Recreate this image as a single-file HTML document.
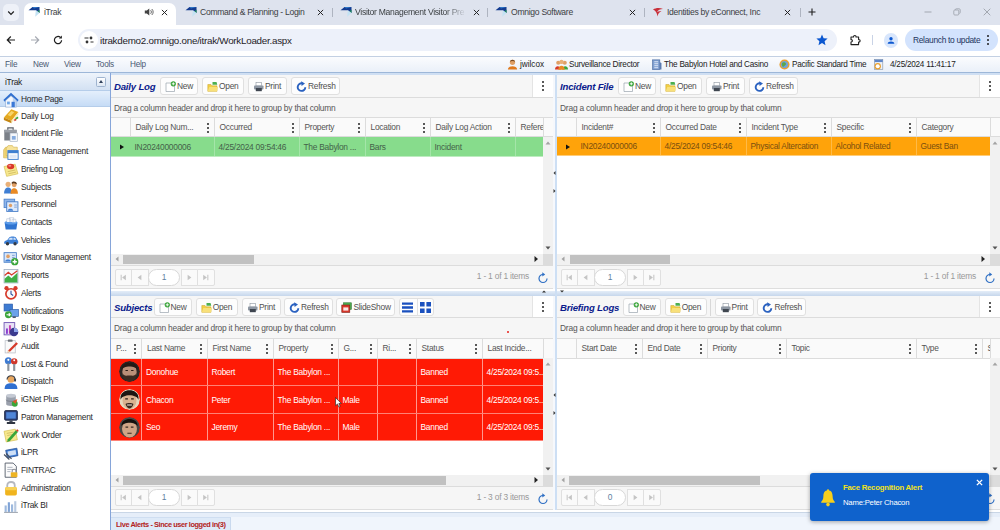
<!DOCTYPE html>
<html lang="en">
<head>
<meta charset="utf-8">
<title>iTrak</title>
<style>
*{box-sizing:border-box;margin:0;padding:0}
html,body{width:1000px;height:530px;overflow:hidden;background:#fff}
body{font-family:"Liberation Sans",sans-serif;font-size:9px;color:#333;position:relative}
.abs{position:absolute}
/* ---------- browser chrome ---------- */
#tabbar{position:absolute;left:0;top:0;width:1000px;height:25px;background:#dee3ee}
#tabbar .tab{position:absolute;top:0;height:25px;font-size:8.6px;color:#3c4043;line-height:24px;white-space:nowrap;letter-spacing:-.3px}
#tabbar .fade{overflow:hidden;-webkit-mask-image:linear-gradient(90deg,#000 80%,transparent);mask-image:linear-gradient(90deg,#000 80%,transparent)}
.fav{position:absolute;top:7px;width:12px;height:10px;margin-left:.5px}
.tx{position:absolute;top:8.5px;width:7px;height:7px;margin-left:.5px}
#tabbar .active{background:#fff;border-radius:7px 7px 0 0;top:3px;height:22px;line-height:18px}
#tabbar .x{position:absolute;font-size:9px;color:#222;top:0}
#tabbar .sep{position:absolute;top:8px;width:1px;height:9px;background:#aeb4c0}
#toolbar{position:absolute;left:0;top:25px;width:1000px;height:31px;background:#fff}
#url{position:absolute;left:78px;top:4px;width:759px;height:22px;border-radius:11px;background:#edf1fa}
#url span{position:absolute;left:22px;top:0;line-height:23px;font-size:9.8px;color:#1f2328;letter-spacing:-.25px;white-space:nowrap}
#menubar{position:absolute;left:0;top:56px;width:1000px;height:17px;background:linear-gradient(#fbfcfe,#eaf0f9);border-top:1px solid #c3d0e3;border-bottom:1px solid #9db7d8;font-size:8.2px;color:#4a5872;letter-spacing:-.25px}
#menubar span{position:absolute;top:-1px;line-height:18px;white-space:nowrap}
#menubar .dk{color:#222}
.mi{position:absolute;top:2px;width:11px;height:11px}
/* ---------- sidebar ---------- */
#side{position:absolute;left:0;top:73px;width:110px;height:457px;background:#fff}
#side .hd{position:absolute;left:0;top:0;width:110px;height:18px;background:linear-gradient(#eef4fb,#d3e1f3);border-bottom:1px solid #a8bfdd;line-height:18.5px;padding-left:5px;font-size:8.4px;letter-spacing:-.25px;color:#222}
#side .hd .col{position:absolute;left:96px;top:4px;width:10px;height:10px;border:1px solid #9fb4cf;border-radius:1.5px;background:linear-gradient(#fff,#dde7f3)}
#side .hd .col:after{content:"";position:absolute;left:1.5px;top:2px;border:2.5px solid transparent;border-bottom:3.5px solid #30405a;border-top:0}
#side .it{position:absolute;left:0;width:110px;height:17px;line-height:17px;padding-left:21px;font-size:8.4px;letter-spacing:-.25px;color:#2a2a2a;white-space:nowrap}
#side .sel{background:linear-gradient(#e4effc,#c6dcf6);border:1px solid #b5cdea;border-left:0;border-right:0}
#side .ic{position:absolute;left:3px;top:.5px;width:16px;height:16px}

/* ---------- panels ---------- */
#work{position:absolute;left:110px;top:73px;width:890px;height:457px;background:#f6f8fc;border-left:1px solid #86a5d9;overflow:hidden}
.sph{position:absolute;left:0;width:890px;height:2px;background:#c9daf0;z-index:3}
.spv{position:absolute;top:0;width:2.5px;background:#cddff4;z-index:3}
.cover{position:absolute;left:0;width:890px;background:#f6f8fc;z-index:2}
.panel{position:absolute;background:#fff;overflow:hidden}
.tb{position:absolute;left:0;top:0;right:0;height:var(--tb);background:#f6f6f6;border-bottom:1px solid #dcdcdc}
.tb .ttl{position:absolute;left:3px;top:1px;line-height:23px;font-size:9.6px;font-weight:bold;font-style:italic;color:#0a1a8c;white-space:nowrap;letter-spacing:-.2px}
.btn{position:absolute;top:3px;height:18px;border:1px solid #e0e0e0;border-radius:3px;background:#fdfdfd;font-size:8.4px;line-height:16px;color:#505050;white-space:nowrap;letter-spacing:-.25px}
.btn svg{position:absolute;left:4px;top:3px;width:11px;height:11px}
.btn span{position:absolute;left:16px;top:0}
.more{position:absolute;right:0;top:0;width:21px;bottom:0;background:#fff;border-left:1px solid #e4e4e4}
.more i,.ch i{position:absolute;width:2px;height:2px;background:#222;border-radius:1px}
.grp{position:absolute;left:0;top:var(--tb);right:0;height:var(--grp);background:#f6f6f6;border-bottom:1px solid #dcdcdc;line-height:var(--grp);padding-left:3px;font-size:8.4px;color:#555;white-space:nowrap;letter-spacing:-.2px}
.chr{position:absolute;left:0;top:calc(var(--tb) + var(--grp));right:0;height:var(--chh);background:#fafafa;border-bottom:1px solid #dcdcdc}
.ch{position:absolute;top:0;bottom:0;border-right:1px solid #dcdcdc;line-height:19px;padding-left:5px;font-size:8.4px;color:#555;white-space:nowrap;overflow:hidden;letter-spacing:-.25px}
.row{position:absolute;left:0;height:20px;border-bottom:1px solid rgba(255,255,255,.45)}
.c{position:absolute;top:0;height:100%;border-right:1px solid rgba(255,255,255,.35);padding-left:4px;font-size:8.4px;white-space:nowrap;overflow:hidden;letter-spacing:-.25px}
.vs{position:absolute;right:0;width:10px;background:#f1f1f1}
.hs{position:absolute;left:0;right:0;height:11px;background:#f1f1f1}
.hs b{position:absolute;top:1px;height:9px;background:#c1c1c1}
.pg{position:absolute;left:0;right:0;bottom:0;height:24px;background:#f6f6f6;border-top:1px solid #dcdcdc;border-bottom:1px solid #dedede;font-size:8.4px;color:#999}
.pg .pb{position:absolute;top:2.7px;width:17px;height:17px;border:1px solid #e0e0e0;background:#fafafa}
.pg .pb svg{position:absolute;left:0;top:0;width:15px;height:15px}
.pg .pn{position:absolute;top:2.7px;left:37px;width:32px;height:17px;border:1px solid #d8d8d8;border-radius:9px;background:#fff;text-align:center;line-height:15px;color:#5f7f9f;font-size:8.4px;z-index:1}
.pg .info{position:absolute;right:24px;top:0;line-height:21.5px;white-space:nowrap;letter-spacing:-.2px}
#status{position:absolute;left:0;top:443.5px;width:890px;height:14px;background:#f0f5fc;z-index:4}
#status .la{position:absolute;left:0;top:0;width:119.5px;height:14px;background:#deeaf8;border-right:1px solid #c9d9ee;border-top:1px solid #cfdef1;padding-left:5px;line-height:14.5px;font-size:7.4px;font-weight:bold;color:#b3221c;white-space:nowrap;letter-spacing:-.43px}
#toast{position:absolute;left:810px;top:473px;width:179px;height:48px;border-radius:3px;background:#0f62cc;box-shadow:0 1px 4px rgba(0,0,0,.35);z-index:10}
#toast .t1{position:absolute;left:33px;top:9.5px;font-size:7.7px;font-weight:bold;color:#f3e21a;white-space:nowrap;letter-spacing:-.2px;line-height:10px}
#toast .t2{position:absolute;left:33px;top:25px;font-size:7.7px;color:#fff;white-space:nowrap;letter-spacing:-.2px;line-height:10px}
</style>
</head>
<body>
<!-- ======= TAB BAR ======= -->
<div id="tabbar">
  <div style="position:absolute;left:3px;top:4px;width:16px;height:17px;border-radius:5px;background:#eef1f8"></div>
  <svg viewBox="0 0 8 6" style="position:absolute;left:7px;top:10px;width:8px;height:6px"><path d="M1.2 1.5 L4 4.3 L6.8 1.5" stroke="#1f1f1f" stroke-width="1.2" fill="none"/></svg>
  <div class="tab active" style="left:24px;width:152px"></div>
  <svg class="fav" viewBox="0 0 12 10" style="left:27px"><path d="M.5 3.2 L4.5 0 H11.5 V6 L7.8 3.2Z" fill="#143c90"/><path d="M4.5 0 H11.5 L6 1.6Z" fill="#2f78c8"/><path d="M11.5 2.4 V6 L9.4 4.4Z" fill="#1f8a5a"/><path d="M7.8 3.2 L11.5 6 L7.2 9.8Z" fill="#c4e2f3"/></svg><span class="tab" style="left:44px">iTrak</span>
  <svg viewBox="0 0 10 10" style="position:absolute;left:144px;top:7px;width:10px;height:10px"><path d="M.8 3.6 H2.8 L5.3 1.4 V8.6 L2.8 6.4 H.8Z" fill="#444"/><path d="M6.6 3.2 C7.6 4.2 7.6 5.8 6.6 6.8 M7.8 2 C9.6 3.7 9.6 6.3 7.8 8" stroke="#444" stroke-width=".8" fill="none"/></svg>
  <svg class="tx" viewBox="0 0 8 8" style="left:160px"><path d="M1 1 L7 7 M7 1 L1 7" stroke="#1f1f1f" stroke-width="1.1" fill="none"/></svg>
  <svg class="fav" viewBox="0 0 12 10" style="left:184px"><path d="M.5 3.2 L4.5 0 H11.5 V6 L7.8 3.2Z" fill="#143c90"/><path d="M4.5 0 H11.5 L6 1.6Z" fill="#2f78c8"/><path d="M11.5 2.4 V6 L9.4 4.4Z" fill="#1f8a5a"/><path d="M7.8 3.2 L11.5 6 L7.2 9.8Z" fill="#c4e2f3"/></svg><span class="tab" style="left:200px">Command &amp; Planning - Login</span><svg class="tx" viewBox="0 0 8 8" style="left:316px"><path d="M1 1 L7 7 M7 1 L1 7" stroke="#1f1f1f" stroke-width="1.1" fill="none"/></svg><i class="sep" style="left:332px"></i>
  <svg class="fav" viewBox="0 0 12 10" style="left:339px"><path d="M.5 3.2 L4.5 0 H11.5 V6 L7.8 3.2Z" fill="#143c90"/><path d="M4.5 0 H11.5 L6 1.6Z" fill="#2f78c8"/><path d="M11.5 2.4 V6 L9.4 4.4Z" fill="#1f8a5a"/><path d="M7.8 3.2 L11.5 6 L7.2 9.8Z" fill="#c4e2f3"/></svg><span class="tab fade" style="left:355px;width:112px">Visitor Management Visitor Pre</span><svg class="tx" viewBox="0 0 8 8" style="left:472px"><path d="M1 1 L7 7 M7 1 L1 7" stroke="#1f1f1f" stroke-width="1.1" fill="none"/></svg><i class="sep" style="left:487px"></i>
  <svg class="fav" viewBox="0 0 12 10" style="left:494px"><path d="M.5 3.2 L4.5 0 H11.5 V6 L7.8 3.2Z" fill="#143c90"/><path d="M4.5 0 H11.5 L6 1.6Z" fill="#2f78c8"/><path d="M11.5 2.4 V6 L9.4 4.4Z" fill="#1f8a5a"/><path d="M7.8 3.2 L11.5 6 L7.2 9.8Z" fill="#c4e2f3"/></svg><span class="tab" style="left:511px">Omnigo Software</span><svg class="tx" viewBox="0 0 8 8" style="left:628px"><path d="M1 1 L7 7 M7 1 L1 7" stroke="#1f1f1f" stroke-width="1.1" fill="none"/></svg><i class="sep" style="left:644px"></i>
  <svg class="fav" viewBox="0 0 12 10" style="left:651px"><path d="M1 2.5 C4 .5 8 .5 11 2 C8 2 6 3 5 5 C6.5 4 8 4 9.5 4.5 C7.5 5 6 6.5 5.5 9.5 C5 6 3.5 3.5 1 2.5Z" fill="#c8303a"/></svg><span class="tab" style="left:667px">Identities by eConnect, Inc</span><svg class="tx" viewBox="0 0 8 8" style="left:783px"><path d="M1 1 L7 7 M7 1 L1 7" stroke="#1f1f1f" stroke-width="1.1" fill="none"/></svg><i class="sep" style="left:800px"></i>
  <svg viewBox="0 0 8 8" style="position:absolute;left:808px;top:8px;width:8px;height:8px"><path d="M4 .5 V7.5 M.5 4 H7.5" stroke="#1f1f1f" stroke-width="1.1"/></svg>
  <svg viewBox="0 0 8 8" style="position:absolute;left:924px;top:8px;width:8px;height:8px"><path d="M.5 4 H7.5" stroke="#a2a7b0" stroke-width="1"/></svg>
  <svg viewBox="0 0 8 8" style="position:absolute;left:953px;top:8px;width:8px;height:8px"><rect x=".8" y="2" width="5" height="5" rx="1" fill="none" stroke="#a2a7b0" stroke-width=".9"/><path d="M2.4 2 V1.6 C2.4 1 2.8 .8 3.2 .8 H6.2 C6.9 .8 7.2 1.2 7.2 1.8 V4.6 C7.2 5.2 6.9 5.4 6.4 5.4" fill="none" stroke="#a2a7b0" stroke-width=".9"/></svg>
  <svg viewBox="0 0 8 8" style="position:absolute;left:983px;top:8px;width:8px;height:8px"><path d="M.7 .7 L7.3 7.3 M7.3 .7 L.7 7.3" stroke="#a2a7b0" stroke-width="1"/></svg>
</div>
<!-- ======= TOOLBAR ======= -->
<div id="toolbar">
  <svg viewBox="0 0 10 10" style="position:absolute;left:6px;top:10px;width:10px;height:10px"><path d="M9 5 H1.5 M4.8 1.5 L1.3 5 L4.8 8.5" stroke="#1f1f1f" stroke-width="1.2" fill="none"/></svg>
  <svg viewBox="0 0 10 10" style="position:absolute;left:30px;top:10px;width:10px;height:10px"><path d="M1 5 H8.5 M5.2 1.5 L8.7 5 L5.2 8.5" stroke="#a7abb3" stroke-width="1.2" fill="none"/></svg>
  <svg viewBox="0 0 10 10" style="position:absolute;left:53px;top:10px;width:10px;height:10px"><path d="M8.6 5.2 A3.6 3.6 0 1 1 7.3 2.3" stroke="#1f1f1f" stroke-width="1.2" fill="none"/><path d="M8.9 .6 V3.6 H5.9Z" fill="#1f1f1f"/></svg>
  <div id="url"><i style="position:absolute;left:2px;top:2px;width:18px;height:18px;border-radius:9px;background:#fff"></i>
    <svg viewBox="0 0 10 8" style="position:absolute;left:6px;top:7px;width:10px;height:8px"><path d="M.5 2 H4.5 M6.5 6 H9.5" stroke="#333" stroke-width="1.1"/><circle cx="7" cy="2" r="1.4" fill="#333"/><circle cx="3" cy="6" r="1.4" fill="#333"/></svg>
    <span>itrakdemo2.omnigo.one/itrak/WorkLoader.aspx</span>
    <svg viewBox="0 0 12 12" style="position:absolute;left:738px;top:5px;width:12px;height:12px"><path d="M6 .6 L7.6 4.3 L11.6 4.6 L8.6 7.2 L9.5 11.2 L6 9.1 L2.5 11.2 L3.4 7.2 L.4 4.6 L4.4 4.3Z" fill="#0b57d0"/></svg>
  </div>
  <svg viewBox="0 0 12 12" style="position:absolute;left:849px;top:9px;width:12px;height:12px"><path d="M2 3 H4.6 C4.2 1 7.4 1 7 3 H9.6 V5.6 C11.6 5.2 11.6 8.4 9.6 8 V10.6 H2 V8 C3.8 8.2 3.8 5.4 2 5.6Z" fill="none" stroke="#1f1f1f" stroke-width="1.1" stroke-linejoin="round"/></svg>
  <i style="position:absolute;left:872px;top:10px;width:1px;height:10px;background:#c9d3e6"></i>
  <i style="position:absolute;left:883.5px;top:8px;width:14.5px;height:14.5px;border-radius:8px;background:#d8e6fc"></i>
  <svg viewBox="0 0 10 10" style="position:absolute;left:886.7px;top:11px;width:8px;height:9px"><circle cx="5" cy="2.8" r="2.1" fill="#0b57d0"/><path d="M.8 9.2 C.8 5.4 9.2 5.4 9.2 9.2Z" fill="#0b57d0"/></svg>
  <div style="position:absolute;left:905px;top:4px;width:93px;height:22px;border-radius:11px;background:#d3e3fd;font-size:8.4px;line-height:22px;color:#22355e;padding-left:8px;white-space:nowrap;letter-spacing:-.3px">Relaunch to update
    <i style="position:absolute;left:82px;top:6px;width:2px;height:2px;border-radius:1px;background:#1f1f1f;box-shadow:0 4px 0 #1f1f1f,0 8px 0 #1f1f1f"></i></div>
</div>
<!-- ======= MENU BAR ======= -->
<div id="menubar">
  <span style="left:5px">File</span>
  <span style="left:33px">New</span>
  <span style="left:64px">View</span>
  <span style="left:96px">Tools</span>
  <span style="left:130px">Help</span>
  <svg class="mi" viewBox="0 0 10 10" style="left:507px"><circle cx="5" cy="3" r="2.4" fill="#e0a066"/><path d="M.8 9.6 C.8 5.6 9.2 5.6 9.2 9.6Z" fill="#e07a1e"/><path d="M2.6 2.6 C3 0 7 0 7.4 2.6 C6 1.6 4 1.6 2.6 2.6Z" fill="#7a4a1e"/></svg><span class="dk" style="left:520px;letter-spacing:0">jwilcox</span>
  <svg class="mi" viewBox="0 0 12 10" style="left:555px;width:13px"><circle cx="3" cy="3.4" r="1.9" fill="#e0a066"/><circle cx="9" cy="3.4" r="1.9" fill="#e0a066"/><circle cx="6" cy="2.6" r="2" fill="#e9b078"/><path d="M0 9.6 C0 5.6 5 5.6 5.4 9.6Z" fill="#d63a2a"/><path d="M6.6 9.6 C7 5.6 12 5.6 12 9.6Z" fill="#3aa53a"/><path d="M3 9.8 C3 5 9 5 9 9.8Z" fill="#e98a24"/></svg><span class="dk" style="left:569px">Surveillance Director</span>
  <svg class="mi" viewBox="0 0 10 10" style="left:651px"><rect x="1.5" y=".8" width="6.5" height="8.8" fill="#7f9fd0" stroke="#4a6aa0" stroke-width=".6"/><path d="M3 2.5 H6.5 M3 4.3 H6.5 M3 6.1 H6.5 M3 7.9 H6.5" stroke="#e8eefa" stroke-width=".8"/><path d="M8 3 L9.5 3.6 V9.6 H8Z" fill="#5a7ab0"/></svg><span class="dk" style="left:664px">The Babylon Hotel and Casino</span>
  <svg class="mi" viewBox="0 0 10 10" style="left:779px"><circle cx="5" cy="5" r="4.6" fill="#e9a030"/><circle cx="5" cy="5" r="3.2" fill="#6fa3dc"/><path d="M3 3.5 C4 2.5 6 3 6.5 4.5 C6 6 4.5 6.5 3.5 7.2 C2.5 6 2.4 4.5 3 3.5Z" fill="#5aa84a"/></svg><span class="dk" style="left:792px">Pacific Standard Time</span>
  <svg class="mi" viewBox="0 0 10 10" style="left:873px"><rect x="1.5" y=".6" width="7.4" height="8.8" fill="#eef2f8" stroke="#8a97ab" stroke-width=".6"/><rect x="1.5" y=".6" width="7.4" height="2.2" fill="#5f86c8"/><circle cx="4.3" cy="6.6" r="2.9" fill="#e9a030"/><circle cx="4.3" cy="6.6" r="1.8" fill="#fff"/></svg><span class="dk" style="left:890px">4/25/2024 11:41:17</span>
</div>
<!-- ======= SIDEBAR ======= -->
<div id="side">
  <div class="hd">iTrak<i class="col"></i></div>
<!--SIDE-->
  <div class="it sel" style="top:17.0px"><svg class="ic" viewBox="0 0 15 15"><path d="M.3 7.6 L7.5 .8 L14.7 7.6 L13.2 9.2 L7.5 3.9 L1.8 9.2Z" fill="#2f6fd0"/><path d="M2.4 8 L7.5 3.4 L12.6 8 V14.2 H2.4Z" fill="#f3f7fd" stroke="#7f9cc8" stroke-width=".5"/><path d="M9.2 5 L12.6 8 V14.2 H9.2Z" fill="#bcd2f0"/><rect x="8" y="9.2" width="3" height="5" fill="#3a78d6"/><rect x="3.8" y="9" width="2.6" height="2.6" fill="#6ea6e8"/></svg>Home Page</div>
  <div class="it" style="top:34.7px"><svg class="ic" viewBox="0 0 15 15"><path d="M.8 9 L7.8 1.2 L14.4 3.8 L8 12Z" fill="#e5a91f"/><path d="M.8 9 L8 12 V14.2 L.8 11.2Z" fill="#c48612"/><path d="M8 12 L14.4 3.8 V6 L8 14.2Z" fill="#f7ebbe"/><path d="M4.3 6.6 L7.9 2.8 L10.6 3.9 L7 7.8Z" fill="#f8d56a"/><path d="M11.5 9.4 L14 8 L14.4 9.6 L12 11Z" fill="#3aa53a"/><path d="M10.4 10.8 L12 10 L12.6 11.6 L10.8 12.4Z" fill="#d63a2a"/></svg>Daily Log</div>
  <div class="it" style="top:52.4px"><svg class="ic" viewBox="0 0 15 15"><path d="M1.2 3.6 H12.8 V13.6 H1.2Z" fill="#7b8088"/><path d="M1.2 3.6 H12.8 V6 H1.2Z" fill="#9a9fa7"/><path d="M4.5 3.6 V1.8 H9.5 V3.6" fill="none" stroke="#5a5f67" stroke-width="1.1"/><rect x="6.6" y="6.6" width="7" height="8" fill="#f4f7fb" stroke="#a9b4c4" stroke-width=".6"/><rect x="8.3" y="9.4" width="3.6" height="3.4" fill="#86acdf"/></svg>Incident File</div>
  <div class="it" style="top:70.1px"><svg class="ic" viewBox="0 0 15 15"><path d="M.6 5.5 L2.4 3 H6.4 L7.4 4.4 H11 V13 H.6Z" fill="#f3d878" stroke="#cba83c" stroke-width=".5"/><path d="M3 4 L4.8 1.5 H8.8 L9.8 3 H13.4 V11 H3Z" fill="#f7e39a" stroke="#cba83c" stroke-width=".5"/><rect x="4.6" y="6.2" width="9.6" height="8.2" fill="#fff" stroke="#3e7fd0" stroke-width=".9"/><rect x="4.6" y="6.2" width="9.6" height="2.4" fill="#3e7fd0"/><rect x="6" y="10" width="6.8" height="3" fill="#dfe8f6"/></svg>Case Management</div>
  <div class="it" style="top:87.8px"><svg class="ic" viewBox="0 0 15 15"><path d="M1 5.2 L11.4 3 L14 12 L3.4 14.4Z" fill="#f7e88f" stroke="#d2b94a" stroke-width=".6"/><path d="M4.4 10 L11.6 8.4 M5 12 L12.2 10.4" stroke="#c9b25a" stroke-width=".7"/><ellipse cx="7.2" cy="5.2" rx="3.4" ry="2.6" fill="#d9362a"/><ellipse cx="6.4" cy="4.4" rx="1.4" ry=".9" fill="#f08a80"/></svg>Briefing Log</div>
  <div class="it" style="top:105.6px"><svg class="ic" viewBox="0 0 15 15"><circle cx="4.8" cy="5" r="2.4" fill="#e9b078"/><path d="M1 13.5 C1 9.5 3 8 4.8 8 C6.6 8 8.5 9.5 8.5 13.5Z" fill="#3f7fd4"/><circle cx="10.5" cy="5.5" r="2.3" fill="#e0a066"/><path d="M7 13.8 C7 10 8.8 8.6 10.5 8.6 C12.3 8.6 14 10 14 13.8Z" fill="#e98a24"/><path d="M8 3.5 C9 1.8 12.5 1.8 13 4.5 L12.5 5 C11.5 3.8 9.5 3.6 8.4 4.6Z" fill="#5a3a1e"/></svg>Subjects</div>
  <div class="it" style="top:123.3px"><svg class="ic" viewBox="0 0 15 15"><rect x="1" y="2" width="10" height="8" fill="#8fb6ea" stroke="#3f78c6" stroke-width=".7"/><rect x="3.5" y="4.5" width="10.5" height="9" fill="#dfeafa" stroke="#3f78c6" stroke-width=".8"/><circle cx="7" cy="8" r="1.6" fill="#e0a066"/><path d="M4.5 12.8 C4.5 10.5 9.5 10.5 9.5 12.8Z" fill="#3f7fd4"/><path d="M10.5 7.5 H13 M10.5 9.5 H13" stroke="#6f95cc" stroke-width=".8"/></svg>Personnel</div>
  <div class="it" style="top:141.0px"><svg class="ic" viewBox="0 0 15 15"><path d="M1.5 7 H13.5 L12.5 13.5 H2.5Z" fill="#2f74d0"/><ellipse cx="7.5" cy="7" rx="6" ry="2" fill="#5b9be8"/><path d="M3.5 6.5 V3.5 H7 V6.5 M6 6.5 V2.5 H10 V6.5 M8.5 6.8 V4 H12 V6.8" fill="#fff" stroke="#a8b8cf" stroke-width=".5"/></svg>Contacts</div>
  <div class="it" style="top:158.7px"><svg class="ic" viewBox="0 0 15 15"><path d="M1 10.5 C1 8.5 2.5 8 4 7.5 L6 5 C7 4 11 4 12 5 L13.5 7.5 C14.5 8 14.5 10 14 11 H1.5Z" fill="#3c7fd6"/><path d="M5 7.3 L6.5 5.5 H9 V7.3Z M9.8 5.5 H11.3 L12.3 7.3 H9.8Z" fill="#cfe2fa"/><circle cx="4.2" cy="11" r="1.6" fill="#333a46"/><circle cx="11.3" cy="11" r="1.6" fill="#333a46"/></svg>Vehicles</div>
  <div class="it" style="top:176.4px"><svg class="ic" viewBox="0 0 15 15"><rect x="1" y="2.5" width="11.5" height="9" fill="#dbe8fa" stroke="#3f78c6" stroke-width=".8"/><circle cx="4.7" cy="6" r="1.7" fill="#e0a066"/><path d="M2 10.8 C2 8.3 7.4 8.3 7.4 10.8Z" fill="#3f7fd4"/><path d="M8.5 5 H11 M8.5 7 H11" stroke="#6f95cc" stroke-width=".8"/><circle cx="11" cy="11" r="3.4" fill="#3aa53a"/><path d="M11 9 V13 M9 11 H13" stroke="#fff" stroke-width="1.3"/></svg>Visitor Management</div>
  <div class="it" style="top:194.1px"><svg class="ic" viewBox="0 0 15 15"><rect x="1" y="1.5" width="13" height="12.5" fill="#f5f8fc" stroke="#9aa9bd" stroke-width=".7"/><path d="M1.5 13.5 L1.5 10 L5 7 L8 9.5 L13.5 4.5 V13.5Z" fill="#3fae45"/><path d="M1.5 7 L5 4 L8 6.5 L13.5 2.5" fill="none" stroke="#d63a2a" stroke-width="1.1"/></svg>Reports</div>
  <div class="it" style="top:211.8px"><svg class="ic" viewBox="0 0 15 15"><circle cx="3.3" cy="3" r="2" fill="#d63a2a"/><circle cx="11.7" cy="3" r="2" fill="#d63a2a"/><circle cx="7.5" cy="8.3" r="5.6" fill="#d63a2a"/><circle cx="7.5" cy="8.3" r="4" fill="#fbfbfb"/><path d="M7.5 5.5 V8.5 L9.5 9.8" fill="none" stroke="#2a4f9e" stroke-width="1"/></svg>Alerts</div>
  <div class="it" style="top:229.5px"><svg class="ic" viewBox="0 0 15 15"><rect x="1" y="1" width="8" height="6.5" fill="#3d7bd2" stroke="#2a5aa8" stroke-width=".6"/><rect x="6.5" y="6" width="8" height="6.5" fill="#6aa1ea" stroke="#2a5aa8" stroke-width=".6"/><rect x="9" y="12.5" width="3" height="1.6" fill="#4a5a70"/><circle cx="5" cy="11" r="3.2" fill="#3aa53a"/><path d="M3.3 11 H6.7 M5.4 9.6 L6.8 11 L5.4 12.4" stroke="#fff" stroke-width="1" fill="none"/></svg>Notifications</div>
  <div class="it" style="top:247.2px"><svg class="ic" viewBox="0 0 15 15"><rect x="1" y="1.5" width="10" height="11.5" fill="#e8e2f6" stroke="#6a50b0" stroke-width=".8"/><rect x="2.8" y="7" width="1.8" height="5" fill="#8b3fd0"/><rect x="5.6" y="4" width="1.8" height="8" fill="#c23fb0"/><circle cx="10.3" cy="10.3" r="4" fill="#3a3a8e"/><path d="M10.3 10.3 V6.3 A4 4 0 0 1 14.3 10.3Z" fill="#8fa6ea"/></svg>BI by Exago</div>
  <div class="it" style="top:264.9px"><svg class="ic" viewBox="0 0 15 15"><rect x="2" y="2.5" width="9.5" height="11.5" fill="#fafafa" stroke="#b9bec6" stroke-width=".7"/><rect x="4.5" y="1.3" width="4.5" height="2.3" rx=".8" fill="#6b7078"/><path d="M5 11.5 L12.5 4 L14 5.5 L6.5 13 L4.3 13.6Z" fill="#d63a2a"/><path d="M5 11.5 L6.5 13 L4.3 13.6Z" fill="#f0d9a8"/></svg>Audit</div>
  <div class="it" style="top:282.7px"><svg class="ic" viewBox="0 0 15 15"><circle cx="5" cy="4.5" r="3.3" fill="#3d7bd2"/><circle cx="10.5" cy="5" r="3" fill="#d0382c"/><rect x="4" y="7" width="2" height="7" fill="#8c949e"/><rect x="9.5" y="7.5" width="2" height="6.5" fill="#8c949e"/><circle cx="5" cy="3.6" r="1" fill="#fff"/><circle cx="10.5" cy="4" r=".9" fill="#fff"/></svg>Lost &amp; Found</div>
  <div class="it" style="top:300.4px"><svg class="ic" viewBox="0 0 15 15"><circle cx="7.5" cy="5" r="3.3" fill="#e9a860"/><path d="M1.5 14 C1.5 9.5 4.5 8.6 7.5 8.6 C10.5 8.6 13.5 9.5 13.5 14Z" fill="#2f6fd0"/><path d="M3.8 5.2 C3.8 .5 11.2 .5 11.2 5.2" fill="none" stroke="#3a3f48" stroke-width="1.1"/><rect x="10.4" y="4.3" width="1.8" height="2.8" rx=".8" fill="#3a3f48"/></svg>iDispatch</div>
  <div class="it" style="top:318.1px"><svg class="ic" viewBox="0 0 15 15"><path d="M3 3.5 V11.5 C3 13.6 12 13.6 12 11.5 V3.5Z" fill="#9aa0ac"/><ellipse cx="7.5" cy="3.5" rx="4.5" ry="1.8" fill="#c4c9d3"/><path d="M3 7.3 C3 9.2 12 9.2 12 7.3" fill="none" stroke="#6f7580" stroke-width=".7"/><circle cx="11" cy="11" r="2.8" fill="#3aa53a"/><path d="M9 9 L13.5 6.5 L12 11Z" fill="#e0552a"/></svg>iGNet Plus</div>
  <div class="it" style="top:335.8px"><svg class="ic" viewBox="0 0 15 15"><rect x="1.5" y="1.5" width="12" height="9" rx="1" fill="#2b3f78" stroke="#1c2742" stroke-width=".8"/><rect x="3" y="3" width="9" height="6" fill="#4f86d8"/><rect x="6" y="10.5" width="3" height="2" fill="#4a5260"/><rect x="3.5" y="12.3" width="8" height="1.7" rx=".6" fill="#2e3440"/></svg>Patron Management</div>
  <div class="it" style="top:353.5px"><svg class="ic" viewBox="0 0 15 15"><path d="M1 4 L11.5 2 L13.5 12 L3 14Z" fill="#f7e98e" stroke="#d2b94a" stroke-width=".6"/><path d="M3.5 6 L10 4.8 M4 8 L9 7.1" stroke="#c9b25a" stroke-width=".7"/><path d="M4.5 11.5 L12 3 L14 4.8 L6.5 13.2 L3.8 14Z" fill="#3aa53a"/><path d="M12 3 L14 4.8 L14.6 3.2 L13.5 2.2Z" fill="#d63a2a"/></svg>Work Order</div>
  <div class="it" style="top:371.2px"><svg class="ic" viewBox="0 0 15 15"><path d="M2.5 5 L13 3 L14 10 L4 12Z" fill="#3d7bd2" stroke="#274f94" stroke-width=".7"/><path d="M4.2 6.2 L11.8 4.7 L12.4 8.8 L5 10.3Z" fill="#cfe0f7"/><path d="M1 9 L6 13.5 M3 8 L8 13" stroke="#4a5260" stroke-width="1.2"/></svg>iLPR</div>
  <div class="it" style="top:388.9px"><svg class="ic" viewBox="0 0 15 15"><path d="M2 1 H9.5 L12.5 4 V14.3 H2Z" fill="#fcfcfc" stroke="#4a5260" stroke-width=".8"/><path d="M4 5 H9 M4 7 H10 M4 9 H7" stroke="#9aa3b0" stroke-width=".7"/><rect x="7.3" y="9.5" width="6.2" height="4.8" rx=".6" fill="#eeb422"/><path d="M8.6 9.5 V8.3 C8.6 6.4 12.2 6.4 12.2 8.3 V9.5" fill="none" stroke="#8c8f96" stroke-width="1"/></svg>FINTRAC</div>
  <div class="it" style="top:406.6px"><svg class="ic" viewBox="0 0 15 15"><path d="M4 7 V5 C4 .8 11 .8 11 5 V7" fill="none" stroke="#b5b8bf" stroke-width="1.7"/><rect x="2" y="6.5" width="11" height="8" rx="1.5" fill="#f0b41e"/><rect x="2" y="6.5" width="11" height="3" rx="1.5" fill="#f8d256"/></svg>Administration</div>
  <div class="it" style="top:424.3px"><svg class="ic" viewBox="0 0 15 15"><rect x="1.5" y="7" width="2" height="6" fill="#9db9de"/><rect x="4.5" y="4" width="2" height="9" fill="#7fa3d6"/><rect x="7.5" y="6" width="2" height="7" fill="#9db9de"/><rect x="10.5" y="3" width="2" height="10" fill="#b8c9e0"/><path d="M1 13.5 H14" stroke="#8a93a0" stroke-width=".8"/></svg>iTrak BI</div>

<!--/SIDE-->
</div>

<!-- ======= WORK AREA ======= -->
<div id="work">
<!--P1-->
<div class="panel" style="left:0px;top:1px;width:442px;height:215px;--tb:24px;--grp:20px;--chh:19px">
<div class="tb"><span class="ttl">Daily Log</span><div class="btn" style="left:49px;width:38px"><svg viewBox="0 0 11 11"><path d="M1 2 H7.5 L9.5 4 V10.5 H1Z" fill="#fff" stroke="#9aa3ad" stroke-width=".7"/><circle cx="8.3" cy="2.8" r="2.6" fill="#3aa53a"/><path d="M8.3 1.3 V4.3 M6.8 2.8 H9.8" stroke="#fff" stroke-width=".9"/></svg><span>New</span></div><div class="btn" style="left:91px;width:42px"><svg viewBox="0 0 11 11"><path d="M.8 3.5 H4 L5 4.8 H10 V10.3 H.8Z" fill="#f2cf45" stroke="#c9a52c" stroke-width=".5"/><path d="M5.5 1 H9.5 L10.3 3.8 L5.5 3.8Z" fill="#4caf50"/><path d="M.8 10.3 L2.3 6 H11 L10 10.3Z" fill="#f8e07a"/></svg><span>Open</span></div><div class="btn" style="left:137px;width:39px"><svg viewBox="0 0 11 11"><rect x="3" y="1.5" width="5.5" height="3.5" fill="#fff" stroke="#8c949e" stroke-width=".6"/><rect x="1" y="4.5" width="9.5" height="4" rx=".8" fill="#8e97a3"/><rect x="2.8" y="7" width="6" height="3.2" fill="#3f4650"/></svg><span>Print</span></div><div class="btn" style="left:180px;width:49px"><svg viewBox="0 0 11 11"><path d="M9.3 6.2 A3.8 3.8 0 1 1 6.3 2.4" fill="none" stroke="#2b62c0" stroke-width="1.9"/><path d="M5.2 .2 L9 2.4 L5.6 4.9Z" fill="#2b62c0"/></svg><span>Refresh</span></div><div class="more"><i style="left:9px;top:7px"></i><i style="left:9px;top:11px"></i><i style="left:9px;top:15px"></i></div></div>
<div class="grp">Drag a column header and drop it here to group by that column</div>
<div class="chr"><div class="ch" style="left:0px;width:19.5px"></div><div class="ch" style="left:19.5px;width:84.0px">Daily Log Num...<i style="right:5px;top:5px"></i><i style="right:5px;top:9px"></i><i style="right:5px;top:13px"></i></div><div class="ch" style="left:103.5px;width:85.0px">Occurred<i style="right:5px;top:5px"></i><i style="right:5px;top:9px"></i><i style="right:5px;top:13px"></i></div><div class="ch" style="left:188.5px;width:66.0px">Property<i style="right:5px;top:5px"></i><i style="right:5px;top:9px"></i><i style="right:5px;top:13px"></i></div><div class="ch" style="left:254.5px;width:65.0px">Location<i style="right:5px;top:5px"></i><i style="right:5px;top:9px"></i><i style="right:5px;top:13px"></i></div><div class="ch" style="left:319.5px;width:85.0px">Daily Log Action<i style="right:5px;top:5px"></i><i style="right:5px;top:9px"></i><i style="right:5px;top:13px"></i></div><div class="ch" style="left:404.5px;width:28.0px">Refere</div></div>
<div class="row" style="top:63px;height:20px;width:432.5px;background:#87dc8c;color:#44624a;line-height:20px"><div class="c" style="left:0px;width:19.5px;border-right-color:transparent"><svg viewBox="0 0 6 6" style="position:absolute;left:8px;top:50%;margin-top:-2.5px;width:6px;height:6px"><path d="M1 .5 L5 3 L1 5.5Z" fill="#111"/></svg></div><div class="c" style="left:19.5px;width:84.0px;border-right-color:rgba(255,255,255,.25)">IN20240000006</div><div class="c" style="left:103.5px;width:85.0px;border-right-color:rgba(255,255,255,.25)">4/25/2024 09:54:46</div><div class="c" style="left:188.5px;width:66.0px;border-right-color:rgba(255,255,255,.25)">The Babylon ...</div><div class="c" style="left:254.5px;width:65.0px;border-right-color:rgba(255,255,255,.25)">Bars</div><div class="c" style="left:319.5px;width:85.0px;border-right-color:rgba(255,255,255,.25)">Incident</div><div class="c" style="left:404.5px;width:28.0px;border-right-color:rgba(255,255,255,.25)"></div></div>
<div class="vs" style="top:63px;bottom:35px"><svg viewBox="0 0 10 6" style="position:absolute;left:0;top:3px;width:10px;height:6px"><path d="M2.5 4.5 L5 1.5 L7.5 4.5Z" fill="#a3a3a3"/></svg><svg viewBox="0 0 10 6" style="position:absolute;left:0;bottom:3px;width:10px;height:6px"><path d="M2.5 1.5 L5 4.5 L7.5 1.5Z" fill="#555"/></svg></div>
<div class="hs" style="bottom:24px"><svg viewBox="0 0 6 10" style="position:absolute;left:3px;top:0;width:6px;height:10px"><path d="M4.5 2.5 L1.5 5 L4.5 7.5Z" fill="#a3a3a3"/></svg><b style="left:11.5px;width:131.5px"></b><svg viewBox="0 0 6 10" style="position:absolute;right:14px;top:0;width:6px;height:10px"><path d="M1.5 2 L5 5 L1.5 8Z" fill="#222"/></svg><u style="position:absolute;right:0;top:0;width:10px;height:11px;background:#dcdcdc"></u></div>
<div class="pg"><div class="pb" style="left:3.5px;border-radius:2px 0 0 2px"><svg viewBox="0 0 16 16"><path d="M5.5 5 V11" stroke="#c4c4c4" stroke-width="1.1"/><path d="M10.5 5 L6.5 8 L10.5 11Z" fill="#c4c4c4"/></svg></div><div class="pb" style="left:19.5px;width:18px"><svg viewBox="0 0 16 16"><path d="M10 5 L6 8 L10 11Z" fill="#c4c4c4"/></svg></div><div class="pn">1</div><div class="pb" style="left:70px"><svg viewBox="0 0 16 16"><path d="M6 5 L10 8 L6 11Z" fill="#c4c4c4"/></svg></div><div class="pb" style="left:86px;width:17.5px;border-radius:0 2px 2px 0"><svg viewBox="0 0 16 16"><path d="M10.5 5 V11" stroke="#c4c4c4" stroke-width="1.1"/><path d="M5.5 5 L9.5 8 L5.5 11Z" fill="#c4c4c4"/></svg></div><span class="info">1 - 1 of 1 items</span><svg viewBox="0 0 12 12" style="position:absolute;right:4px;top:6px;width:12px;height:12px"><path d="M10 6.5 A4 4 0 1 1 6 2.5" fill="none" stroke="#2e6fc4" stroke-width="1.2"/><path d="M5.3 .3 L8.2 2.5 L5.3 4.6Z" fill="#2e6fc4"/></svg></div>
</div>
<!--P2-->
<div class="panel" style="left:446px;top:1px;width:443px;height:215px;--tb:24px;--grp:20px;--chh:19px">
<div class="tb"><span class="ttl">Incident File</span><div class="btn" style="left:61px;width:38px"><svg viewBox="0 0 11 11"><path d="M1 2 H7.5 L9.5 4 V10.5 H1Z" fill="#fff" stroke="#9aa3ad" stroke-width=".7"/><circle cx="8.3" cy="2.8" r="2.6" fill="#3aa53a"/><path d="M8.3 1.3 V4.3 M6.8 2.8 H9.8" stroke="#fff" stroke-width=".9"/></svg><span>New</span></div><div class="btn" style="left:103px;width:42px"><svg viewBox="0 0 11 11"><path d="M.8 3.5 H4 L5 4.8 H10 V10.3 H.8Z" fill="#f2cf45" stroke="#c9a52c" stroke-width=".5"/><path d="M5.5 1 H9.5 L10.3 3.8 L5.5 3.8Z" fill="#4caf50"/><path d="M.8 10.3 L2.3 6 H11 L10 10.3Z" fill="#f8e07a"/></svg><span>Open</span></div><div class="btn" style="left:149px;width:39px"><svg viewBox="0 0 11 11"><rect x="3" y="1.5" width="5.5" height="3.5" fill="#fff" stroke="#8c949e" stroke-width=".6"/><rect x="1" y="4.5" width="9.5" height="4" rx=".8" fill="#8e97a3"/><rect x="2.8" y="7" width="6" height="3.2" fill="#3f4650"/></svg><span>Print</span></div><div class="btn" style="left:192px;width:49px"><svg viewBox="0 0 11 11"><path d="M9.3 6.2 A3.8 3.8 0 1 1 6.3 2.4" fill="none" stroke="#2b62c0" stroke-width="1.9"/><path d="M5.2 .2 L9 2.4 L5.6 4.9Z" fill="#2b62c0"/></svg><span>Refresh</span></div><div class="more"><i style="left:9px;top:7px"></i><i style="left:9px;top:11px"></i><i style="left:9px;top:15px"></i></div></div>
<div class="grp">Drag a column header and drop it here to group by that column</div>
<div class="chr"><div class="ch" style="left:0px;width:19.5px"></div><div class="ch" style="left:19.5px;width:84.0px">Incident#<i style="right:5px;top:5px"></i><i style="right:5px;top:9px"></i><i style="right:5px;top:13px"></i></div><div class="ch" style="left:103.5px;width:86.0px">Occurred Date<i style="right:5px;top:5px"></i><i style="right:5px;top:9px"></i><i style="right:5px;top:13px"></i></div><div class="ch" style="left:189.5px;width:85.0px">Incident Type<i style="right:5px;top:5px"></i><i style="right:5px;top:9px"></i><i style="right:5px;top:13px"></i></div><div class="ch" style="left:274.5px;width:85.0px">Specific<i style="right:5px;top:5px"></i><i style="right:5px;top:9px"></i><i style="right:5px;top:13px"></i></div><div class="ch" style="left:359.5px;width:74.0px">Category</div></div>
<div class="row" style="top:63px;height:19px;width:433.5px;background:#ffa30a;color:#7a4f10;line-height:19px"><div class="c" style="left:0px;width:19.5px;border-right-color:transparent"><svg viewBox="0 0 6 6" style="position:absolute;left:8px;top:50%;margin-top:-2.5px;width:6px;height:6px"><path d="M1 .5 L5 3 L1 5.5Z" fill="#111"/></svg></div><div class="c" style="left:19.5px;width:84.0px;border-right-color:rgba(255,255,255,.25)">IN20240000006</div><div class="c" style="left:103.5px;width:86.0px;border-right-color:rgba(255,255,255,.25)">4/25/2024 09:54:46</div><div class="c" style="left:189.5px;width:85.0px;border-right-color:rgba(255,255,255,.25)">Physical Altercation</div><div class="c" style="left:274.5px;width:85.0px;border-right-color:rgba(255,255,255,.25)">Alcohol Related</div><div class="c" style="left:359.5px;width:74.0px;border-right-color:rgba(255,255,255,.25)">Guest Ban</div></div>
<div class="vs" style="top:63px;bottom:35px"><svg viewBox="0 0 10 6" style="position:absolute;left:0;top:3px;width:10px;height:6px"><path d="M2.5 4.5 L5 1.5 L7.5 4.5Z" fill="#a3a3a3"/></svg><svg viewBox="0 0 10 6" style="position:absolute;left:0;bottom:3px;width:10px;height:6px"><path d="M2.5 1.5 L5 4.5 L7.5 1.5Z" fill="#555"/></svg></div>
<div class="hs" style="bottom:24px"><svg viewBox="0 0 6 10" style="position:absolute;left:3px;top:0;width:6px;height:10px"><path d="M4.5 2.5 L1.5 5 L4.5 7.5Z" fill="#a3a3a3"/></svg><b style="left:13px;width:100px"></b><svg viewBox="0 0 6 10" style="position:absolute;right:14px;top:0;width:6px;height:10px"><path d="M1.5 2 L5 5 L1.5 8Z" fill="#222"/></svg><u style="position:absolute;right:0;top:0;width:10px;height:11px;background:#dcdcdc"></u></div>
<div class="pg"><div class="pb" style="left:3.5px;border-radius:2px 0 0 2px"><svg viewBox="0 0 16 16"><path d="M5.5 5 V11" stroke="#c4c4c4" stroke-width="1.1"/><path d="M10.5 5 L6.5 8 L10.5 11Z" fill="#c4c4c4"/></svg></div><div class="pb" style="left:19.5px;width:18px"><svg viewBox="0 0 16 16"><path d="M10 5 L6 8 L10 11Z" fill="#c4c4c4"/></svg></div><div class="pn">1</div><div class="pb" style="left:70px"><svg viewBox="0 0 16 16"><path d="M6 5 L10 8 L6 11Z" fill="#c4c4c4"/></svg></div><div class="pb" style="left:86px;width:17.5px;border-radius:0 2px 2px 0"><svg viewBox="0 0 16 16"><path d="M10.5 5 V11" stroke="#c4c4c4" stroke-width="1.1"/><path d="M5.5 5 L9.5 8 L5.5 11Z" fill="#c4c4c4"/></svg></div><span class="info">1 - 1 of 1 items</span><svg viewBox="0 0 12 12" style="position:absolute;right:4px;top:6px;width:12px;height:12px"><path d="M10 6.5 A4 4 0 1 1 6 2.5" fill="none" stroke="#2e6fc4" stroke-width="1.2"/><path d="M5.3 .3 L8.2 2.5 L5.3 4.6Z" fill="#2e6fc4"/></svg></div>
</div>
<!--P3-->
<div class="panel" style="left:0px;top:221.5px;width:442px;height:215.0px;--tb:23.5px;--grp:20.5px;--chh:20px">
<div class="tb"><span class="ttl">Subjects</span><div class="btn" style="left:42.5px;width:38.5px"><svg viewBox="0 0 11 11"><path d="M1 2 H7.5 L9.5 4 V10.5 H1Z" fill="#fff" stroke="#9aa3ad" stroke-width=".7"/><circle cx="8.3" cy="2.8" r="2.6" fill="#3aa53a"/><path d="M8.3 1.3 V4.3 M6.8 2.8 H9.8" stroke="#fff" stroke-width=".9"/></svg><span>New</span></div><div class="btn" style="left:84.7px;width:42.5px"><svg viewBox="0 0 11 11"><path d="M.8 3.5 H4 L5 4.8 H10 V10.3 H.8Z" fill="#f2cf45" stroke="#c9a52c" stroke-width=".5"/><path d="M5.5 1 H9.5 L10.3 3.8 L5.5 3.8Z" fill="#4caf50"/><path d="M.8 10.3 L2.3 6 H11 L10 10.3Z" fill="#f8e07a"/></svg><span>Open</span></div><div class="btn" style="left:131px;width:38.6px"><svg viewBox="0 0 11 11"><rect x="3" y="1.5" width="5.5" height="3.5" fill="#fff" stroke="#8c949e" stroke-width=".6"/><rect x="1" y="4.5" width="9.5" height="4" rx=".8" fill="#8e97a3"/><rect x="2.8" y="7" width="6" height="3.2" fill="#3f4650"/></svg><span>Print</span></div><div class="btn" style="left:173px;width:48.5px"><svg viewBox="0 0 11 11"><path d="M9.3 6.2 A3.8 3.8 0 1 1 6.3 2.4" fill="none" stroke="#2b62c0" stroke-width="1.9"/><path d="M5.2 .2 L9 2.4 L5.6 4.9Z" fill="#2b62c0"/></svg><span>Refresh</span></div><div class="btn" style="left:225.4px;width:58.6px"><svg viewBox="0 0 11 11"><rect x="2.5" y=".8" width="7.8" height="6.5" fill="#4caf50" stroke="#2b6e2e" stroke-width=".6"/><rect x=".8" y="3" width="8" height="7.4" fill="#d9362a" stroke="#7a1e17" stroke-width=".6"/><rect x="2.3" y="5.4" width="5" height="3.2" fill="#fbe6e4"/></svg><span>SlideShow</span></div><div class="btn" style="left:288px;width:34.5px"><svg viewBox="0 0 11 11" style="left:2px"><path d="M0 1.7 H11 M0 5.5 H11 M0 9.3 H11" stroke="#1a50be" stroke-width="2.3"/></svg><em style="position:absolute;left:16.5px;top:0;width:1px;height:16px;background:#e2e2e2"></em><svg viewBox="0 0 11 11" style="left:19.5px"><path d="M0 0 H4.6 V4.6 H0Z M6.4 0 H11 V4.6 H6.4Z M0 6.4 H4.6 V11 H0Z M6.4 6.4 H11 V11 H6.4Z" fill="#1a50be"/></svg></div><div class="more"><i style="left:9px;top:7px"></i><i style="left:9px;top:11px"></i><i style="left:9px;top:15px"></i></div></div>
<div class="grp">Drag a column header and drop it here to group by that column</div>
<div class="chr"><div class="ch" style="left:0px;width:31.0px">P...<i style="right:5px;top:5px"></i><i style="right:5px;top:9px"></i><i style="right:5px;top:13px"></i></div><div class="ch" style="left:31.0px;width:65.5px">Last Name<i style="right:5px;top:5px"></i><i style="right:5px;top:9px"></i><i style="right:5px;top:13px"></i></div><div class="ch" style="left:96.5px;width:66.0px">First Name<i style="right:5px;top:5px"></i><i style="right:5px;top:9px"></i><i style="right:5px;top:13px"></i></div><div class="ch" style="left:162.5px;width:65.0px">Property<i style="right:5px;top:5px"></i><i style="right:5px;top:9px"></i><i style="right:5px;top:13px"></i></div><div class="ch" style="left:227.5px;width:39.0px">G...<i style="right:5px;top:5px"></i><i style="right:5px;top:9px"></i><i style="right:5px;top:13px"></i></div><div class="ch" style="left:266.5px;width:39.0px">Ri...<i style="right:5px;top:5px"></i><i style="right:5px;top:9px"></i><i style="right:5px;top:13px"></i></div><div class="ch" style="left:305.5px;width:66.0px">Status<i style="right:5px;top:5px"></i><i style="right:5px;top:9px"></i><i style="right:5px;top:13px"></i></div><div class="ch" style="left:371.5px;width:61.0px">Last Incide...</div></div>
<div class="row" style="top:64px;height:27.5px;width:432.5px;background:#ff1a05;color:#fff;line-height:27.5px"><div class="c" style="left:0px;width:31.0px;border-right-color:rgba(255,255,255,.55)"><svg viewBox="0 0 22 22" style="position:absolute;left:8px;top:2.5px;width:21px;height:21px;border-radius:50%;overflow:hidden"><circle cx="11" cy="11" r="11" fill="#2b2624"/><g transform="translate(11 12) scale(1.4) translate(-11 -11)"><path d="M2 23 C2 16 20 16 20 23Z" fill="#3c3836"/><ellipse cx="11" cy="10.6" rx="5.4" ry="6.8" fill="#b98f78"/><path d="M5 9.5 C3.8 1.5 18.2 1.5 17 9.5 C16 5.5 6 5.5 5 9.5Z" fill="#231a15"/><path d="M5.6 11.5 C6 20 16 20 16.4 11.5 C15 14.2 13 13.2 11 13.2 C9 13.2 7 14.2 5.6 11.5Z" fill="#3a2a21"/><path d="M8 9.6 H9.8 M12.2 9.6 H14" stroke="#2a1c16" stroke-width=".8"/></g></svg></div><div class="c" style="left:31.0px;width:65.5px;border-right-color:rgba(255,255,255,.55)">Donohue</div><div class="c" style="left:96.5px;width:66.0px;border-right-color:rgba(255,255,255,.55)">Robert</div><div class="c" style="left:162.5px;width:65.0px;border-right-color:rgba(255,255,255,.55)">The Babylon ...</div><div class="c" style="left:227.5px;width:39.0px;border-right-color:rgba(255,255,255,.55)"></div><div class="c" style="left:266.5px;width:39.0px;border-right-color:rgba(255,255,255,.55)"></div><div class="c" style="left:305.5px;width:66.0px;border-right-color:rgba(255,255,255,.55)">Banned</div><div class="c" style="left:371.5px;width:61.0px;border-right-color:rgba(255,255,255,.55)">4/25/2024 09:5...</div></div>
<div class="row" style="top:91.5px;height:28px;width:432.5px;background:#ff1a05;color:#fff;line-height:28px"><div class="c" style="left:0px;width:31.0px;border-right-color:rgba(255,255,255,.55)"><svg viewBox="0 0 22 22" style="position:absolute;left:8px;top:2.5px;width:21px;height:21px;border-radius:50%;overflow:hidden"><circle cx="11" cy="11" r="11" fill="#e6d6bc"/><g transform="translate(11 12) scale(1.4) translate(-11 -11)"><path d="M3 23 C3 16.5 19 16.5 19 23Z" fill="#6f6a66"/><ellipse cx="11" cy="11" rx="5.2" ry="6.4" fill="#d9b18f"/><path d="M4.4 10.5 C2.5 1 19.5 1 17.6 10.5 C16.6 6 5.4 6 4.4 10.5Z" fill="#1d1612"/><path d="M8 13.6 C9.5 12.6 12.5 12.6 14 13.6 C13 16.2 12 17 11 17 C10 17 9 16.2 8 13.6Z" fill="#3b2a20"/><path d="M9.2 14.4 H12.8" stroke="#f2e8e0" stroke-width=".8"/><path d="M7.8 9.8 H9.8 M12.2 9.8 H14.2" stroke="#2a1c16" stroke-width=".8"/></g></svg></div><div class="c" style="left:31.0px;width:65.5px;border-right-color:rgba(255,255,255,.55)">Chacon</div><div class="c" style="left:96.5px;width:66.0px;border-right-color:rgba(255,255,255,.55)">Peter</div><div class="c" style="left:162.5px;width:65.0px;border-right-color:rgba(255,255,255,.55)">The Babylon ...</div><div class="c" style="left:227.5px;width:39.0px;border-right-color:rgba(255,255,255,.55)">Male</div><div class="c" style="left:266.5px;width:39.0px;border-right-color:rgba(255,255,255,.55)"></div><div class="c" style="left:305.5px;width:66.0px;border-right-color:rgba(255,255,255,.55)">Banned</div><div class="c" style="left:371.5px;width:61.0px;border-right-color:rgba(255,255,255,.55)">4/25/2024 09:5...</div></div>
<div class="row" style="top:119.5px;height:27px;width:432.5px;background:#ff1a05;color:#fff;line-height:27px"><div class="c" style="left:0px;width:31.0px;border-right-color:rgba(255,255,255,.55)"><svg viewBox="0 0 22 22" style="position:absolute;left:8px;top:2.5px;width:21px;height:21px;border-radius:50%;overflow:hidden"><circle cx="11" cy="11" r="11" fill="#4a4644"/><g transform="translate(11 12) scale(1.4) translate(-11 -11)"><path d="M2 23 C2 16.5 20 16.5 20 23Z" fill="#2e2c2b"/><ellipse cx="11" cy="11.2" rx="5.6" ry="6.6" fill="#cfa486"/><path d="M5 9.4 C4.2 2 17.8 2 17 9.4 C15.6 5.8 6.4 5.8 5 9.4Z" fill="#15110e"/><path d="M8 10 H10 M12 10 H14 M9.4 14.6 H12.6" stroke="#3a2a22" stroke-width=".8"/></g></svg></div><div class="c" style="left:31.0px;width:65.5px;border-right-color:rgba(255,255,255,.55)">Seo</div><div class="c" style="left:96.5px;width:66.0px;border-right-color:rgba(255,255,255,.55)">Jeremy</div><div class="c" style="left:162.5px;width:65.0px;border-right-color:rgba(255,255,255,.55)">The Babylon ...</div><div class="c" style="left:227.5px;width:39.0px;border-right-color:rgba(255,255,255,.55)">Male</div><div class="c" style="left:266.5px;width:39.0px;border-right-color:rgba(255,255,255,.55)"></div><div class="c" style="left:305.5px;width:66.0px;border-right-color:rgba(255,255,255,.55)">Banned</div><div class="c" style="left:371.5px;width:61.0px;border-right-color:rgba(255,255,255,.55)">4/25/2024 09:5...</div></div>
<div class="vs" style="top:63px;bottom:35px"><svg viewBox="0 0 10 6" style="position:absolute;left:0;top:3px;width:10px;height:6px"><path d="M2.5 4.5 L5 1.5 L7.5 4.5Z" fill="#a3a3a3"/></svg><svg viewBox="0 0 10 6" style="position:absolute;left:0;bottom:3px;width:10px;height:6px"><path d="M2.5 1.5 L5 4.5 L7.5 1.5Z" fill="#555"/></svg></div>
<div class="hs" style="bottom:24px"><svg viewBox="0 0 6 10" style="position:absolute;left:3px;top:0;width:6px;height:10px"><path d="M4.5 2.5 L1.5 5 L4.5 7.5Z" fill="#a3a3a3"/></svg><b style="left:12px;width:322.5px"></b><svg viewBox="0 0 6 10" style="position:absolute;right:14px;top:0;width:6px;height:10px"><path d="M1.5 2 L5 5 L1.5 8Z" fill="#222"/></svg><u style="position:absolute;right:0;top:0;width:10px;height:11px;background:#dcdcdc"></u></div>
<div class="pg"><div class="pb" style="left:3.5px;border-radius:2px 0 0 2px"><svg viewBox="0 0 16 16"><path d="M5.5 5 V11" stroke="#c4c4c4" stroke-width="1.1"/><path d="M10.5 5 L6.5 8 L10.5 11Z" fill="#c4c4c4"/></svg></div><div class="pb" style="left:19.5px;width:18px"><svg viewBox="0 0 16 16"><path d="M10 5 L6 8 L10 11Z" fill="#c4c4c4"/></svg></div><div class="pn">1</div><div class="pb" style="left:70px"><svg viewBox="0 0 16 16"><path d="M6 5 L10 8 L6 11Z" fill="#c4c4c4"/></svg></div><div class="pb" style="left:86px;width:17.5px;border-radius:0 2px 2px 0"><svg viewBox="0 0 16 16"><path d="M10.5 5 V11" stroke="#c4c4c4" stroke-width="1.1"/><path d="M5.5 5 L9.5 8 L5.5 11Z" fill="#c4c4c4"/></svg></div><span class="info">1 - 3 of 3 items</span><svg viewBox="0 0 12 12" style="position:absolute;right:4px;top:6px;width:12px;height:12px"><path d="M10 6.5 A4 4 0 1 1 6 2.5" fill="none" stroke="#2e6fc4" stroke-width="1.2"/><path d="M5.3 .3 L8.2 2.5 L5.3 4.6Z" fill="#2e6fc4"/></svg></div>
</div>
<!--P4-->
<div class="panel" style="left:446px;top:221.5px;width:443px;height:215.0px;--tb:23.5px;--grp:20.5px;--chh:20px">
<div class="tb"><span class="ttl">Briefing Logs</span><div class="btn" style="left:65.5px;width:38px"><svg viewBox="0 0 11 11"><path d="M1 2 H7.5 L9.5 4 V10.5 H1Z" fill="#fff" stroke="#9aa3ad" stroke-width=".7"/><circle cx="8.3" cy="2.8" r="2.6" fill="#3aa53a"/><path d="M8.3 1.3 V4.3 M6.8 2.8 H9.8" stroke="#fff" stroke-width=".9"/></svg><span>New</span></div><div class="btn" style="left:107.7px;width:42px"><svg viewBox="0 0 11 11"><path d="M.8 3.5 H4 L5 4.8 H10 V10.3 H.8Z" fill="#f2cf45" stroke="#c9a52c" stroke-width=".5"/><path d="M5.5 1 H9.5 L10.3 3.8 L5.5 3.8Z" fill="#4caf50"/><path d="M.8 10.3 L2.3 6 H11 L10 10.3Z" fill="#f8e07a"/></svg><span>Open</span></div><em style="position:absolute;left:153px;top:4px;width:1px;height:17px;background:#d8d8d8"></em><div class="btn" style="left:157.6px;width:39px"><svg viewBox="0 0 11 11"><rect x="3" y="1.5" width="5.5" height="3.5" fill="#fff" stroke="#8c949e" stroke-width=".6"/><rect x="1" y="4.5" width="9.5" height="4" rx=".8" fill="#8e97a3"/><rect x="2.8" y="7" width="6" height="3.2" fill="#3f4650"/></svg><span>Print</span></div><div class="btn" style="left:200.4px;width:48.6px"><svg viewBox="0 0 11 11"><path d="M9.3 6.2 A3.8 3.8 0 1 1 6.3 2.4" fill="none" stroke="#2b62c0" stroke-width="1.9"/><path d="M5.2 .2 L9 2.4 L5.6 4.9Z" fill="#2b62c0"/></svg><span>Refresh</span></div><div class="more"><i style="left:9px;top:7px"></i><i style="left:9px;top:11px"></i><i style="left:9px;top:15px"></i></div></div>
<div class="grp">Drag a column header and drop it here to group by that column</div>
<div class="chr"><div class="ch" style="left:0px;width:19.5px"></div><div class="ch" style="left:19.5px;width:66.0px">Start Date<i style="right:5px;top:5px"></i><i style="right:5px;top:9px"></i><i style="right:5px;top:13px"></i></div><div class="ch" style="left:85.5px;width:65.0px">End Date<i style="right:5px;top:5px"></i><i style="right:5px;top:9px"></i><i style="right:5px;top:13px"></i></div><div class="ch" style="left:150.5px;width:79.0px">Priority<i style="right:5px;top:5px"></i><i style="right:5px;top:9px"></i><i style="right:5px;top:13px"></i></div><div class="ch" style="left:229.5px;width:130.0px">Topic<i style="right:5px;top:5px"></i><i style="right:5px;top:9px"></i><i style="right:5px;top:13px"></i></div><div class="ch" style="left:359.5px;width:66.0px">Type<i style="right:5px;top:5px"></i><i style="right:5px;top:9px"></i><i style="right:5px;top:13px"></i></div><div class="ch" style="left:425.5px;width:8.0px">S</div></div>
<div class="vs" style="top:63px;bottom:35px"><svg viewBox="0 0 10 6" style="position:absolute;left:0;top:3px;width:10px;height:6px"><path d="M2.5 4.5 L5 1.5 L7.5 4.5Z" fill="#a3a3a3"/></svg><svg viewBox="0 0 10 6" style="position:absolute;left:0;bottom:3px;width:10px;height:6px"><path d="M2.5 1.5 L5 4.5 L7.5 1.5Z" fill="#555"/></svg></div>
<div class="hs" style="bottom:24px"><svg viewBox="0 0 6 10" style="position:absolute;left:3px;top:0;width:6px;height:10px"><path d="M4.5 2.5 L1.5 5 L4.5 7.5Z" fill="#a3a3a3"/></svg><b style="left:12px;width:191px"></b><u style="position:absolute;right:0;top:0;width:10px;height:11px;background:#dcdcdc"></u></div>
<div class="pg"><div class="pb" style="left:3.5px;border-radius:2px 0 0 2px"><svg viewBox="0 0 16 16"><path d="M5.5 5 V11" stroke="#c4c4c4" stroke-width="1.1"/><path d="M10.5 5 L6.5 8 L10.5 11Z" fill="#c4c4c4"/></svg></div><div class="pb" style="left:19.5px;width:18px"><svg viewBox="0 0 16 16"><path d="M10 5 L6 8 L10 11Z" fill="#c4c4c4"/></svg></div><div class="pn">0</div><div class="pb" style="left:70px"><svg viewBox="0 0 16 16"><path d="M6 5 L10 8 L6 11Z" fill="#c4c4c4"/></svg></div><div class="pb" style="left:86px;width:17.5px;border-radius:0 2px 2px 0"><svg viewBox="0 0 16 16"><path d="M10.5 5 V11" stroke="#c4c4c4" stroke-width="1.1"/><path d="M5.5 5 L9.5 8 L5.5 11Z" fill="#c4c4c4"/></svg></div><svg viewBox="0 0 12 12" style="position:absolute;right:4px;top:6px;width:12px;height:12px"><path d="M10 6.5 A4 4 0 1 1 6 2.5" fill="none" stroke="#2e6fc4" stroke-width="1.2"/><path d="M5.3 .3 L8.2 2.5 L5.3 4.6Z" fill="#2e6fc4"/></svg></div>
</div>
<!--SPL-->
<div class="sph" style="top:0;height:1.5px;background:#cfdff3"></div>
<div class="cover" style="top:215.5px;height:7.5px;background:#fff"></div><div class="sph" style="top:218px;height:5px;background:linear-gradient(#e4edf8,#c6d7ec)"></div>
<div class="cover" style="top:436.5px;height:7px;background:#fff"></div><div class="sph" style="top:439px;height:1px;background:#c9d6e6"></div><div class="sph" style="top:440px;height:3.5px;background:#e6eef9"></div>
<div class="spv" style="left:443.5px;height:437px"></div>
<svg viewBox="0 0 3 30" style="position:absolute;left:441.5px;top:96px;width:3px;height:30px;z-index:3"><path d="M2.5 2 L.5 4 L2.5 6Z M.5 20 L2.5 22 L.5 24Z" fill="#333"/></svg>
<svg viewBox="0 0 3 30" style="position:absolute;left:441.5px;top:318px;width:3px;height:30px;z-index:3"><path d="M2.5 2 L.5 4 L2.5 6Z M.5 20 L2.5 22 L.5 24Z" fill="#333"/></svg>
<svg viewBox="0 0 30 3" style="position:absolute;left:429px;top:217px;width:30px;height:3px;z-index:3"><path d="M2 2.5 L4 .5 L6 2.5Z M20 .5 L22 2.5 L24 .5Z" fill="#333"/></svg>
<div id="status"><div class="la">Live Alerts - Since user logged in(3)</div></div>
</div>
<!--STATUS-->
<!--CURSOR-->
<svg viewBox="0 0 7 10" style="position:absolute;left:334.7px;top:396.5px;width:7.5px;height:11px;z-index:20"><path d="M.5 .5 V8 L2.3 6.3 L3.6 9.3 L4.9 8.7 L3.6 5.9 H6Z" fill="#fff" stroke="#222" stroke-width=".6" stroke-linejoin="round"/></svg>
<i style="position:absolute;left:507px;top:331px;width:2px;height:2px;border-radius:1px;background:#e8201a;z-index:20"></i>
<!--TOAST-->
<div id="toast">
  <svg viewBox="0 0 16 18" style="position:absolute;left:10px;top:16px;width:16px;height:18px"><path d="M8 1.2 C4.6 1.2 3.4 4 3.4 7 C3.4 10.5 2.2 11.6 1.2 12.8 V13.8 H14.8 V12.8 C13.8 11.6 12.6 10.5 12.6 7 C12.6 4 11.4 1.2 8 1.2Z" fill="#f7cf1c"/><circle cx="8" cy="15.6" r="1.8" fill="#f7cf1c"/><circle cx="8" cy="1.4" r="1.1" fill="#f7cf1c"/></svg>
  <span class="t1">Face Recognition Alert</span>
  <span class="t2">Name:Peter Chacon</span>
  <svg viewBox="0 0 8 8" style="position:absolute;left:166px;top:6px;width:7px;height:7px"><path d="M1 1 L7 7 M7 1 L1 7" stroke="#fff" stroke-width="1.6"/></svg>
</div>
</body>
</html>
